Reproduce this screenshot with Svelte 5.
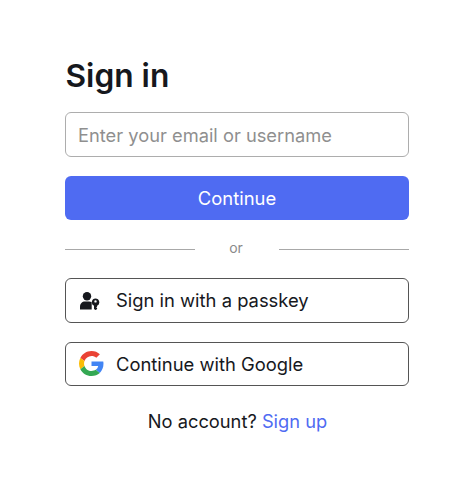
<script>
    let email = $state('');
</script>

<main class="page">
    <h1>Sign in</h1>

    <form class="form" onsubmit={(e) => e.preventDefault()}>
        <input class="field" type="text" placeholder="Enter your email or username" bind:value={email} />
        <button class="primary" type="submit">Continue</button>
    </form>

    <div class="divider">
        <span class="rule"></span>
        <span class="or">or</span>
        <span class="rule"></span>
    </div>

    <div class="providers">
        <button class="provider" type="button">
            <span class="slot">
                <svg class="passkey" viewBox="0 0 20 18" aria-hidden="true">
                    <circle cx="7" cy="4.300" r="4.200" fill="#16181d" />
                    <path d="M0 17.600v-3.200c0-2.900 2.200-5 5-5h4c1 0 1.900.3 2.700.8v7.400z" fill="#16181d" />
                    <path fill-rule="evenodd" d="M15.500 6.400a3.900 3.900 0 0 1 1.600 7.400v.8l-.8.8.8.8v.8l-1.500 1.100-1.600-1.100v-3.200a3.900 3.900 0 0 1 1.500-7.400zm0 1.800a1.200 1.200 0 1 0 0 2.400 1.200 1.200 0 0 0 0-2.400z" fill="#16181d" />
                </svg>
            </span>
            <span>Sign in with a passkey</span>
        </button>

        <button class="provider" type="button">
            <span class="slot">
                <svg class="google" viewBox="0 0 48 48" aria-hidden="true">
                    <path fill="#EA4335" d="M24 9.500c3.500 0 6.700 1.200 9.200 3.600l6.900-6.900C35.900 2.400 30.500 0 24 0 14.600 0 6.500 5.400 2.600 13.200l8 6.200C12.500 13.600 17.800 9.500 24 9.500z" />
                    <path fill="#4285F4" d="M47 24.500c0-1.600-.1-3.100-.4-4.500H24v9h12.900c-.6 3-2.200 5.500-4.700 7.200l7.700 6C44.400 37.500 47 31.600 47 24.500z" />
                    <path fill="#FBBC05" d="M10.500 28.600c-.5-1.400-.8-3-.8-4.600s.3-3.200.8-4.600l-8-6.200C.9 16.500 0 20.100 0 24s.9 7.500 2.600 10.800l7.900-6.200z" />
                    <path fill="#34A853" d="M24 48c6.500 0 11.900-2.100 15.900-5.800l-7.700-6c-2.200 1.400-4.900 2.300-8.200 2.300-6.200 0-11.500-4.100-13.400-9.900l-8 6.200C6.500 42.600 14.600 48 24 48z" />
                </svg>
            </span>
            <span>Continue with Google</span>
        </button>
    </div>

    <p class="signup">No account? <a href="#signup">Sign up</a></p>
</main>

<style>
    :global(body) {
        background: #fff;
    }

    .page {
        display: flex;
        flex-direction: column;
        width: 344px;
        margin-left: 65px;
        padding-top: 55px;
        font-family: Inter, "Liberation Sans", sans-serif;
        color: #16181d;
    }

    h1 {
        margin: 0 0 15px;
        padding-left: 0.5px;
        font-size: 31.7px;
        line-height: 42px;
        font-weight: 600;
    }

    .form {
        display: flex;
        flex-direction: column;
        gap: 19px;
    }

    .field {
        box-sizing: border-box;
        width: 100%;
        height: 45px;
        padding: 0 12px;
        border: 1.5px solid #adadad;
        border-radius: 6px;
        background: #fff;
        font: inherit;
        font-size: 18.3px;
    }

    .field::placeholder {
        color: #8f8f8f;
        opacity: 1;
    }

    .primary {
        height: 44px;
        border: none;
        border-radius: 6px;
        background: #4f6bf2;
        color: #fff;
        font: inherit;
        font-size: 18.4px;
    }

    .divider {
        display: flex;
        align-items: center;
        gap: 34px;
        height: 18px;
        margin: 20px 0;
    }

    .rule {
        flex: 1;
        height: 1px;
        background: #a8a8a8;
    }

    .or {
        padding: 0 2px 4px 0;
        font-size: 14px;
        color: #8a8a8a;
    }

    .providers {
        display: flex;
        flex-direction: column;
        gap: 19px;
    }

    .provider {
        display: flex;
        align-items: center;
        gap: 12px;
        box-sizing: border-box;
        height: 44.5px;
        padding: 0 13px;
        border: 1.5px solid #555;
        border-radius: 6px;
        background: #fff;
        color: #16181d;
        font: inherit;
        font-size: 18.4px;
    }

    .slot {
        display: flex;
        width: 25px;
        flex-shrink: 0;
    }

    .passkey {
        width: 20px;
        height: 18px;
        margin: 1px 0 0 1px;
    }

    .google {
        width: 25px;
        height: 25px;
    }

    .signup {
        margin: 22.5px 0 0 1px;
        text-align: center;
        font-size: 18.3px;
        line-height: 24px;
    }

    .signup a {
        color: #4f6bf2;
        text-decoration: none;
    }
</style>
